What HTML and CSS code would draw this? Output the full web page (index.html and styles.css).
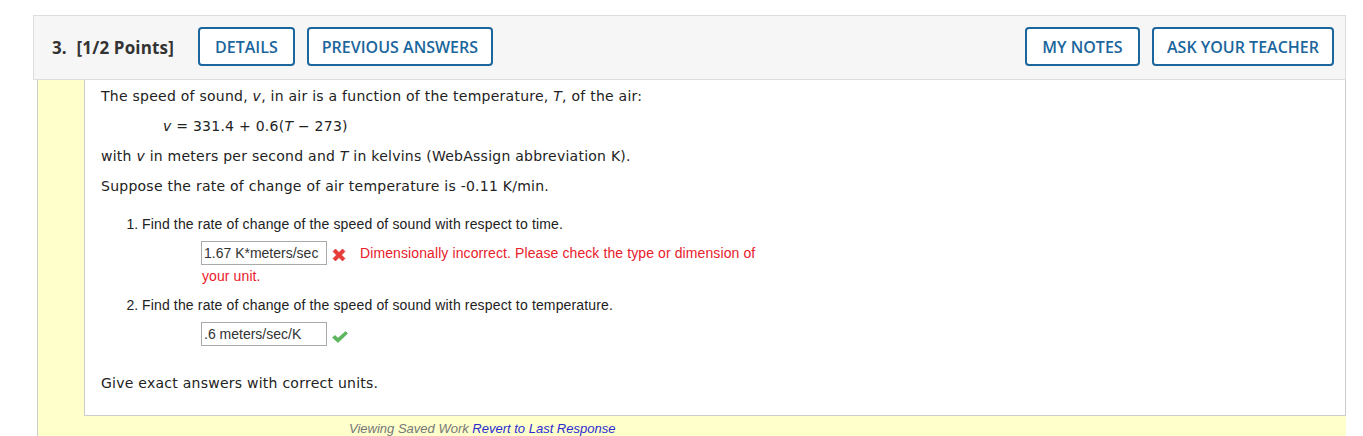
FILE: index.html
```html
<!DOCTYPE html>
<html>
<head>
<meta charset="utf-8">
<link rel="stylesheet" href="styles.css">
</head>
<body>
<div class="question">
  <div class="q-header">
    <div class="q-title"><span class="q-num">3.</span><span class="q-pts">[1/2 Points]</span></div>
    <button class="btn btn-details">DETAILS</button>
    <button class="btn btn-prev">PREVIOUS ANSWERS</button>
    <div class="spacer"></div>
    <button class="btn btn-notes">MY NOTES</button>
    <button class="btn btn-ask">ASK YOUR TEACHER</button>
  </div>
  <div class="q-body">
    <div class="q-content">
      <p class="txt">The speed of sound, <i>v</i>, in air is a function of the temperature, <i>T</i>, of the air:</p>
      <p class="txt eq"><i>v</i> = 331.4 + 0.6(<i>T</i> − 273)</p>
      <p class="txt">with <i>v</i> in meters per second and <i>T</i> in kelvins (WebAssign abbreviation K).</p>
      <p class="txt">Suppose the rate of change of air temperature is -0.11 K/min.</p>
      <ol class="parts">
        <li>
          <div class="prompt">Find the rate of change of the speed of sound with respect to time.</div>
          <div class="answer">
            <span class="ans-box">1.67 K*meters/sec</span>
            <svg class="icon-x" width="16" height="16" viewBox="0 0 16 16"><path d="M2 4.5 L4.5 2 L8 5.5 L11.5 2 L14 4.5 L10.5 8 L14 11.5 L11.5 14 L8 10.5 L4.5 14 L2 11.5 L5.5 8 Z" fill="#ea3b3b" stroke="#d42a2a" stroke-width="0.6" stroke-linejoin="round"/></svg>
            <span class="err">Dimensionally incorrect. Please check the type or dimension of</span>
          </div>
          <div class="err err2">your unit.</div>
        </li>
        <li>
          <div class="prompt">Find the rate of change of the speed of sound with respect to temperature.</div>
          <div class="answer">
            <span class="ans-box">.6 meters/sec/K</span>
            <svg class="icon-check" width="18" height="14" viewBox="0 0 18 14"><path d="M1.5 7.5 L4 5.5 L7 8.2 L14.5 1.5 L16.5 3.5 L7 12.5 Z" fill="#5cb85c" stroke="#4aa64a" stroke-width="0.6" stroke-linejoin="round"/></svg>
          </div>
        </li>
      </ol>
      <p class="txt final">Give exact answers with correct units.</p>
    </div>
    <div class="saved">Viewing Saved Work <span class="revert">Revert to Last Response</span></div>
  </div>
</div>
</body>
</html>
```

FILE: styles.css
```css
html, body {
  margin: 0;
  padding: 0;
  background: #ffffff;
}
body {
  padding: 15px 0 0 33px;
}
.question {
  width: 1313px;
}
.q-header {
  display: flex;
  align-items: center;
  height: 63px;
  background: #f6f6f6;
  border: 1px solid #dddddd;
  padding: 0 11px 0 18px;
}
.q-title {
  font-family: "Open Sans", sans-serif;
  font-weight: 700;
  font-size: 17px;
  color: #333333;
  margin-right: 24px;
  display: flex;
}
.q-pts { margin-left: 10px; letter-spacing: 0.15px; }
.spacer { flex: 1; }
.btn {
  font-family: "Open Sans", sans-serif;
  font-weight: 600;
  font-size: 16px;
  color: #1b669c;
  background: #ffffff;
  border: 2px solid #1b669c;
  border-radius: 4px;
  height: 39px;
  padding: 0;
  margin-left: 12px;
  margin-top: -2px;
}
.btn-details { width: 97px; margin-left: 0; }
.btn-prev { width: 186px; }
.btn-notes { width: 115px; }
.btn-ask { width: 182px; }

.q-body {
  margin-left: 4px;
  background: #ffffcc;
  border-left: 1px solid #cccccc;
  padding-left: 46px;
  min-height: 356px;
}
.q-content {
  background: #ffffff;
  border: 1px solid #cccccc;
  border-top: none;
  height: 329px;
  padding: 6px 0 0 16px;
}
.txt {
  font-family: "DejaVu Sans", sans-serif;
  font-size: 14px;
  letter-spacing: 0.25px;
  line-height: 20px;
  color: #222222;
  margin: 0 0 10px 0;
}
.eq { padding-left: 62px; }
.parts {
  margin: 18px 0 0 0;
  padding: 0 0 0 41px;
  font-family: "Liberation Sans", Arial, sans-serif;
  font-size: 14px;
  color: #222222;
}
.parts li {
  line-height: 20px;
}
.prompt { letter-spacing: 0.15px; }
.answer {
  display: flex;
  align-items: center;
  margin: 7px 0 0 59px;
  height: 24px;
}
.ans-box {
  box-sizing: border-box;
  display: inline-block;
  width: 126px;
  height: 24px;
  line-height: 22px;
  border: 1px solid #a9a9a9;
  padding: 0 2px;
  font-family: "Liberation Sans", Arial, sans-serif;
  font-size: 14px;
  color: #333333;
  white-space: nowrap;
  overflow: hidden;
}
.icon-x { margin-left: 4px; margin-top: 3px; }
.icon-check { margin-left: 4px; margin-top: 6px; }
.err {
  color: #e8202a;
  font-family: "Liberation Sans", Arial, sans-serif;
  font-size: 14px;
  margin-left: 13px;
  letter-spacing: 0.1px;
  white-space: nowrap;
}
.err2 {
  margin: 1px 0 0 60px;
  line-height: 20px;
}
.parts li + li { margin-top: 9px; }
.final { margin-top: 27px; }
.saved {
  font-family: "Liberation Sans", Arial, sans-serif;
  font-style: italic;
  font-size: 13px;
  line-height: 18px;
  color: #777777;
  padding: 4px 0 0 265px;
}
.revert { color: #2b2bd0; }
```
